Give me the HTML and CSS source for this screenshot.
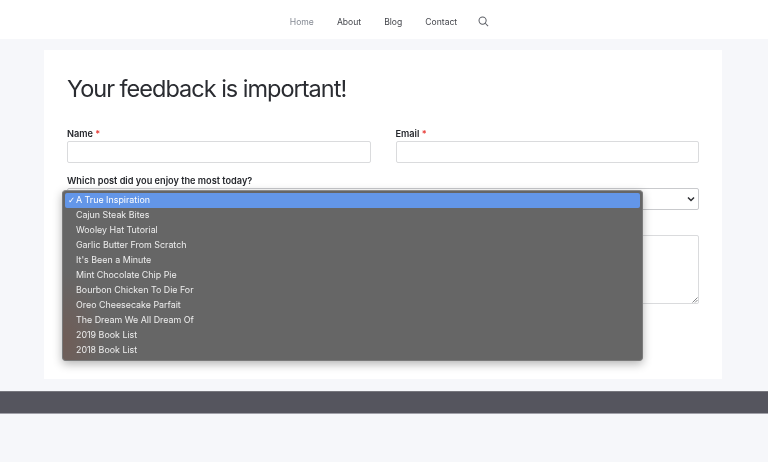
FILE: index.html
```html
<!DOCTYPE html>
<html lang="en">
<head>
<meta charset="utf-8">
<title>Your feedback is important!</title>
<link rel="stylesheet" href="styles.css">
</head>
<body>
<header class="site-header">
  <nav class="nav">
    <a class="nav-link is-current">Home</a>
    <a class="nav-link">About</a>
    <a class="nav-link">Blog</a>
    <a class="nav-link">Contact</a>
    <svg class="search-icon" viewBox="0 0 12 12" width="11" height="11" aria-hidden="true">
      <circle cx="5" cy="5" r="3.9"></circle>
      <path d="M7.9 7.9 11 11"></path>
    </svg>
  </nav>
</header>
<main class="card">
  <h1 class="title">Your feedback is important!</h1>
  <form class="form">
    <div class="row">
      <div class="field">
        <label class="label">Name <span class="req">*</span></label>
        <div class="input"></div>
      </div>
      <div class="field">
        <label class="label">Email <span class="req">*</span></label>
        <div class="input"></div>
      </div>
    </div>
    <div class="field select-field">
      <label class="label">Which post did you enjoy the most today?</label>
      <div class="select">
        <svg class="chevron" viewBox="0 0 8 6" width="8" height="6" aria-hidden="true"><path d="M1 1.5 4 4.5 7 1.5"></path></svg>
      </div>
      <ul class="menu">
        <li class="option is-selected"><span class="check">✓</span>A True Inspiration</li>
        <li class="option">Cajun Steak Bites</li>
        <li class="option">Wooley Hat Tutorial</li>
        <li class="option">Garlic Butter From Scratch</li>
        <li class="option">It's Been a Minute</li>
        <li class="option">Mint Chocolate Chip Pie</li>
        <li class="option">Bourbon Chicken To Die For</li>
        <li class="option">Oreo Cheesecake Parfait</li>
        <li class="option">The Dream We All Dream Of</li>
        <li class="option">2019 Book List</li>
        <li class="option">2018 Book List</li>
      </ul>
    </div>
    <div class="textarea">
      <svg class="grip" viewBox="0 0 6 6" width="6" height="6" aria-hidden="true"><path d="M0.5 5.5 5.5 0.5M3 5.5 5.5 3"></path></svg>
    </div>
  </form>
</main>
<footer class="footer-bar"></footer>
</body>
</html>
```

FILE: styles.css
```css
* { box-sizing: border-box; }
html, body { margin: 0; padding: 0; }
body {
  width: 768px;
  height: 462px;
  overflow: hidden;
  background: #f6f7fa;
  font-family: Inter, "Liberation Sans", sans-serif;
  color: #222429;
  filter: blur(0.3px);
}
.site-header {
  height: 39px;
  padding-top: 4px;
  background: #fff;
  display: flex;
  justify-content: center;
  align-items: center;
}
.nav {
  display: flex;
  align-items: center;
  gap: 23px;
  margin-left: 11px;
  font-size: 8.6px;
}
.nav-link { color: #44464c; }
.nav-link.is-current { color: #858a93; }
.search-icon { fill: none; stroke: #5a5d64; stroke-width: 1.1; margin-left: -2px; }
.card {
  width: 678px;
  height: 329px;
  margin: 11px 0 12px 44px;
  padding: 24px 23px 0;
  background: #fff;
}
.title {
  margin: 0 0 24px;
  font-size: 23.5px;
  line-height: 30px;
  letter-spacing: -1px;
  font-weight: 400;
  color: #2a2c31;
}
.form { display: flex; flex-direction: column; }
.row { display: flex; gap: 25px; margin-bottom: 12px; }
.row .field { flex: 1; }
.field { display: flex; flex-direction: column; }
.label {
  font-size: 9.2px;
  line-height: 12px;
  font-weight: 600;
  margin-bottom: 1px;
  color: #26282d;
}
.req { color: #e8413c; }
.input {
  height: 22px;
  border: 1px solid #dadbdd;
  border-radius: 2px;
  background: #fff;
}
.select-field { position: relative; z-index: 2; }
.select {
  height: 22px;
  border: 1px solid #c9cacd;
  border-radius: 2px;
  background: #fff;
  display: flex;
  align-items: center;
  justify-content: flex-end;
  padding-right: 3px;
}
.chevron { fill: none; stroke: #2c2d31; stroke-width: 1.5; }
.menu {
  position: absolute;
  left: -5px;
  top: 15px;
  width: 581px;
  height: 171px;
  margin: 0;
  padding: 2px;
  list-style: none;
  background: #666666;
  border: 1px solid #7a7a7a;
  border-top-color: #8a8a8a;
  border-radius: 4px;
  box-shadow: 0 3px 10px rgba(0, 0, 0, 0.3);
  background-image: radial-gradient(ellipse 42px 70px at 0 150px, rgba(125, 80, 65, 0.42), rgba(125, 80, 65, 0));
}
.option {
  position: relative;
  height: 15px;
  padding-left: 11px;
  font-size: 8.9px;
  line-height: 14px;
  color: #eeeeee;
  border-radius: 2px;
}
.option.is-selected { background: #6396e8; color: #fff; }
.check {
  position: absolute;
  left: 3px;
  top: 0;
  font-size: 8.5px;
  font-family: "DejaVu Sans", sans-serif;
}
.textarea {
  position: relative;
  align-self: flex-end;
  width: 304px;
  height: 69px;
  margin-top: 25px;
  border: 1px solid #dadbdd;
  border-radius: 2px;
  background: #fff;
}
.grip {
  position: absolute;
  right: 0;
  bottom: 0;
  fill: none;
  stroke: #77787c;
  stroke-width: 0.9;
}
.footer-bar {
  height: 23px;
  background: #55555e;
  border-top: 1px solid #77777e;
  border-bottom: 1px solid #a0a0a8;
}
```
